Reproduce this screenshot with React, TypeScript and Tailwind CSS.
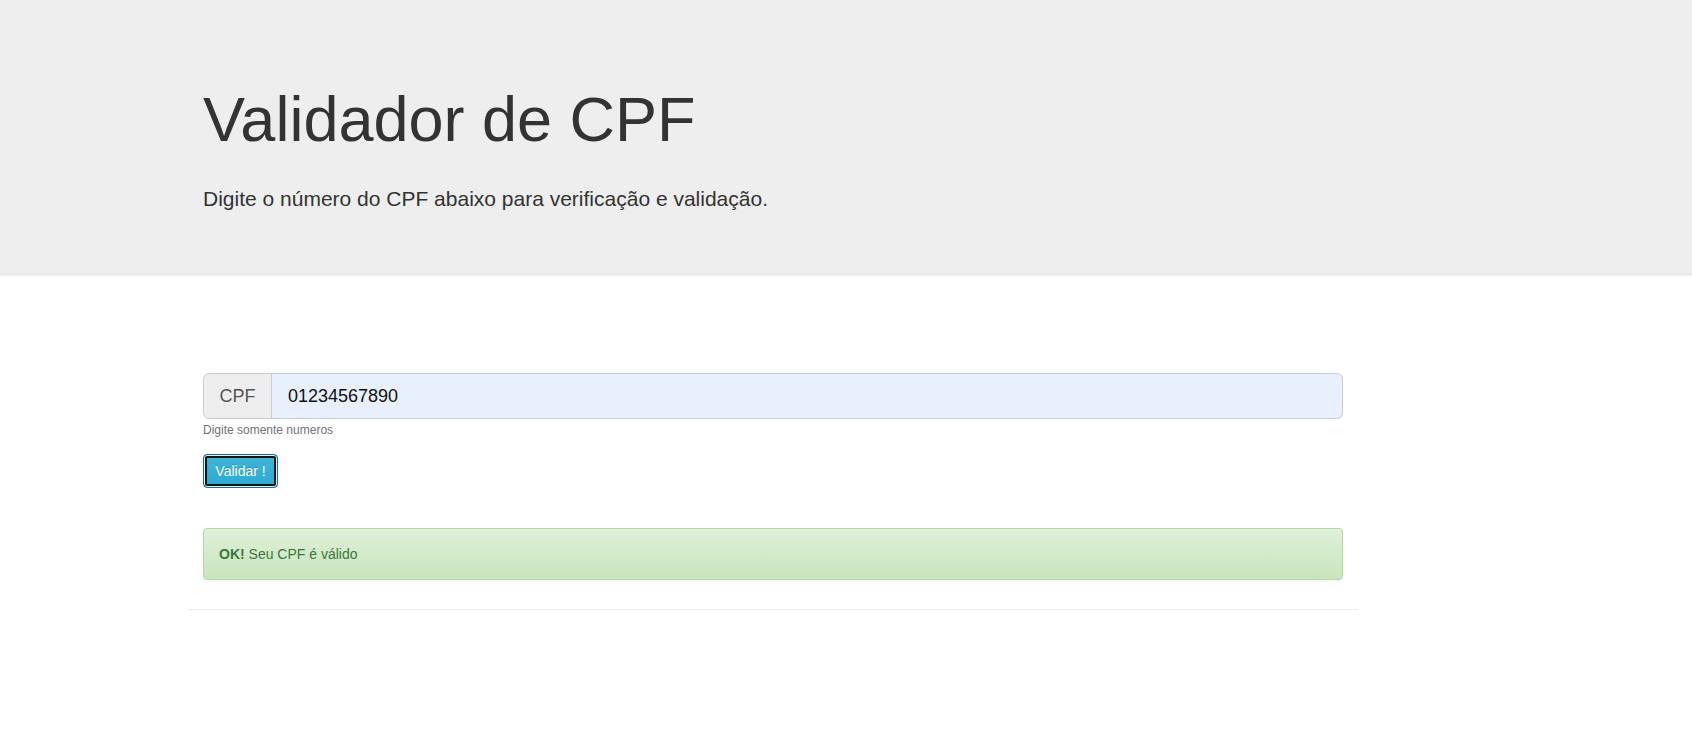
export default function App() {
  return (
    <div className="min-h-[750px] bg-white font-['Liberation_Sans',Arial,sans-serif] text-[#333]">
      {/* Jumbotron */}
      <div className="h-[276px] bg-[#eee]">
        <div className="ml-[188px] w-[1170px] px-[15px] pt-[85px]">
          <h1 className="m-0 text-[63px] leading-[69px] font-normal text-[#333]">
            Validador de CPF
          </h1>
          <p className="mt-[30px] text-[21px] leading-[30px] text-[#333]">
            Digite o número do CPF abaixo para verificação e validação.
          </p>
        </div>
      </div>

      <div className="ml-[188px] w-[1170px]">
        <div className="px-[15px] pt-[97px]">
          {/* Input group */}
          <div className="flex h-[46px]">
            <span className="flex w-[69px] items-center justify-center rounded-l-[6px] border border-[#ccc] bg-[#eee] text-[18px] text-[#555]">
              CPF
            </span>
            <div className="flex flex-1 items-center rounded-r-[6px] border border-l-0 border-[#ccc] bg-[#e8f0fe] px-[16px] text-[18px] text-[#111]">
              01234567890
            </div>
          </div>
          <p className="mt-[3px] text-[12px] leading-[17px] text-[#737373]">
            Digite somente numeros
          </p>

          {/* Button (focused) */}
          <button className="mt-[15px] flex h-[34px] w-[75px] items-center justify-center rounded-[4px] border border-[#1b6d85] bg-gradient-to-b from-[#3fb5d8] to-[#2aabd2] text-[14px] text-white shadow-[inset_0_0_0_1px_#dff3f9,inset_0_0_0_3px_#111] [text-shadow:0_-1px_0_rgba(0,0,0,0.2)]">
            Validar !
          </button>

          {/* Alert */}
          <div className="mt-[40px] rounded-[4px] border border-[#b2dba1] bg-gradient-to-b from-[#dff0d8] to-[#c8e5bc] p-[15px] text-[14px] leading-[20px] text-[#3c763d] shadow-[inset_0_1px_0_rgba(255,255,255,0.25),0_1px_2px_rgba(0,0,0,0.05)]">
            <strong className="font-bold">OK!</strong> Seu CPF é válido
          </div>
        </div>
        <hr className="mt-[29px] border-t border-[#eee]" />
      </div>
    </div>
  );
}
